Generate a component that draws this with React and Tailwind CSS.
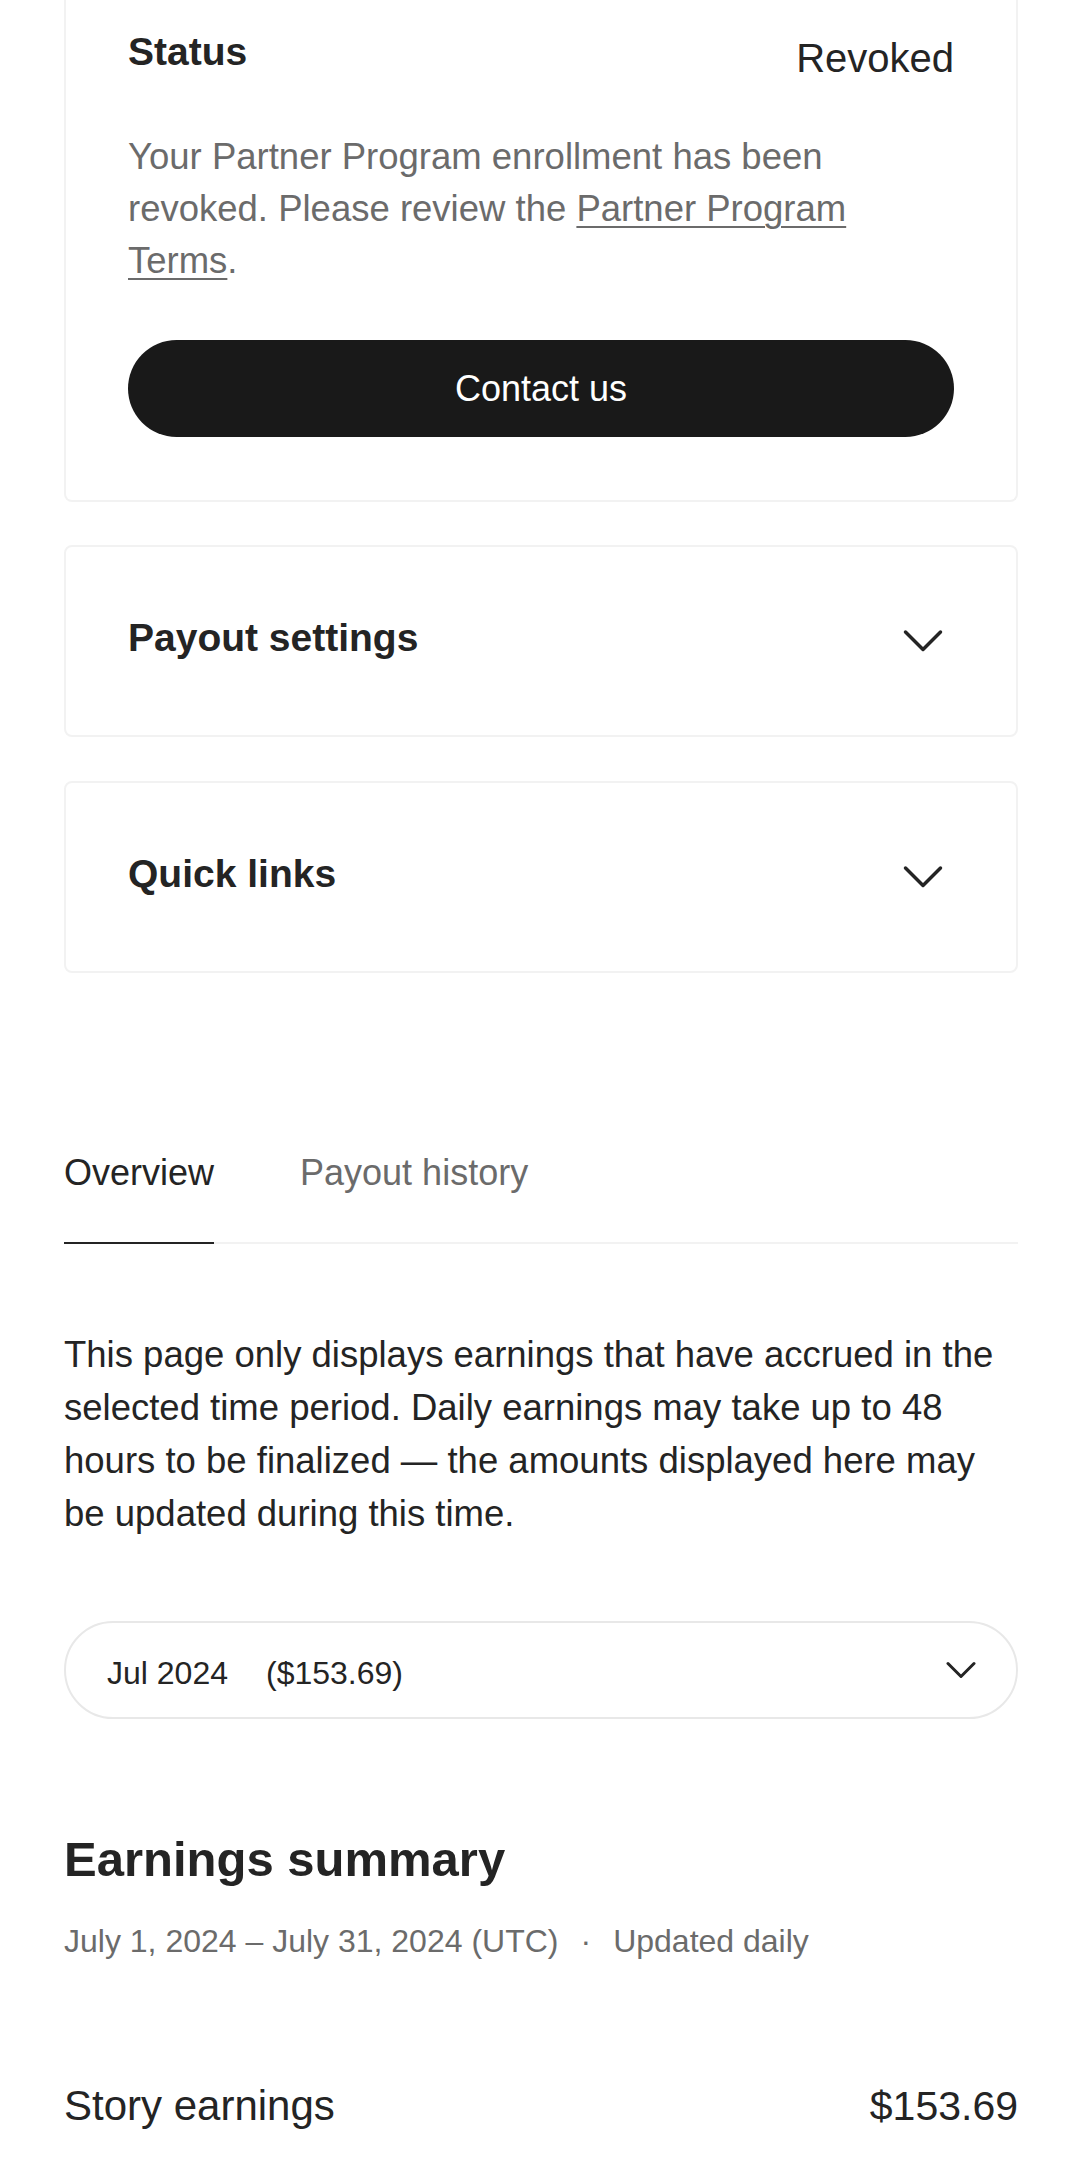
// Partner Program earnings page (mobile, scrolled)

function Chevron({ className }) {
  return (
    <svg className={className} viewBox="0 0 40 24" fill="none" stroke="#242424" strokeWidth="3.5" strokeLinecap="round" strokeLinejoin="round">
      <path d="M2.5 3 L20 20.5 L37.5 3" />
    </svg>
  );
}

function SmallChevron({ className }) {
  return (
    <svg className={className} viewBox="0 0 30 18" fill="none" stroke="#242424" strokeWidth="3" strokeLinecap="round" strokeLinejoin="round">
      <path d="M2 2.5 L15 15.5 L28 2.5" />
    </svg>
  );
}

function CollapsedCard({ title }) {
  return (
    <div className="h-[192px] flex items-center justify-between rounded-lg border-2 border-[#f2f2f2] pl-[62px] pr-[62px]">
      <h2 className="mb-[7px] text-[39px] leading-[48px] font-bold">{title}</h2>
      <Chevron className="w-[40px] h-[24px] mr-[11px]" />
    </div>
  );
}

export default function App() {
  return (
    <div className="min-h-screen bg-white text-[#242424] font-['Liberation_Sans',Arial,sans-serif]">
      <div className="pl-16 pr-[62px]">
        {/* status card, its top is scrolled off */}
        <div className="rounded-b-lg border-x-2 border-b-2 border-[#f2f2f2] px-[62px] pt-[28px] pb-[63px]">
          <div className="flex items-start justify-between">
            <h2 className="text-[39px] leading-[48px] font-bold">Status</h2>
            <span className="mt-[6px] text-[40px] leading-[48px]">Revoked</span>
          </div>
          <p className="mt-[49px] text-[36.5px] leading-[52px] text-[#6b6b6b]">
            Your Partner Program enrollment has been revoked. Please review the{" "}
            <a href="#" className="underline decoration-2 underline-offset-[5px]">Partner Program Terms</a>.
          </p>
          <button className="mt-[53px] w-full h-[97px] rounded-full bg-[#191919] text-white text-[36px] flex items-center justify-center">
            Contact us
          </button>
        </div>

        <div className="mt-[43px] flex flex-col gap-[44px]">
          <CollapsedCard title="Payout settings" />
          <CollapsedCard title="Quick links" />
        </div>

        {/* tabs */}
        <div className="mt-[174px] flex gap-[86px] border-b-2 border-[#f2f2f2] text-[36px] leading-[52px]">
          <button className="pb-[43px] -mb-[2px] border-b-2 border-[#242424]">Overview</button>
          <button className="pb-[43px] -mb-[2px] border-b-2 border-transparent text-[#6b6b6b]">Payout history</button>
        </div>

        <p className="mt-[84px] w-[940px] text-[36.5px] leading-[53px]">
          This page only displays earnings that have accrued in the selected time period. Daily earnings may take up to 48 hours to be finalized — the amounts displayed here may be updated during this time.
        </p>

        <button className="mt-[81px] w-full h-[98px] rounded-full border-2 border-[#e8e8e8] pl-[41px] pr-[40px] flex items-center justify-between">
          <span className="mt-[6px] flex gap-[38px] text-[32px] leading-[40px]">
            <span>Jul 2024</span>
            <span>($153.69)</span>
          </span>
          <SmallChevron className="w-[30px] h-[18px]" />
        </button>

        <h1 className="mt-[110px] text-[49px] leading-[60px] font-bold">Earnings summary</h1>
        <div className="mt-[30px] text-[32px] leading-[44px] text-[#6b6b6b] flex">
          <span>July 1, 2024 – July 31, 2024 (UTC)</span>
          <span className="mx-[22px]">·</span>
          <span>Updated daily</span>
        </div>

        <div className="mt-[115px] flex items-start justify-between text-[42px] leading-[56px]">
          <span>Story earnings</span>
          <span className="text-[41px]">$153.69</span>
        </div>
      </div>
    </div>
  );
}
